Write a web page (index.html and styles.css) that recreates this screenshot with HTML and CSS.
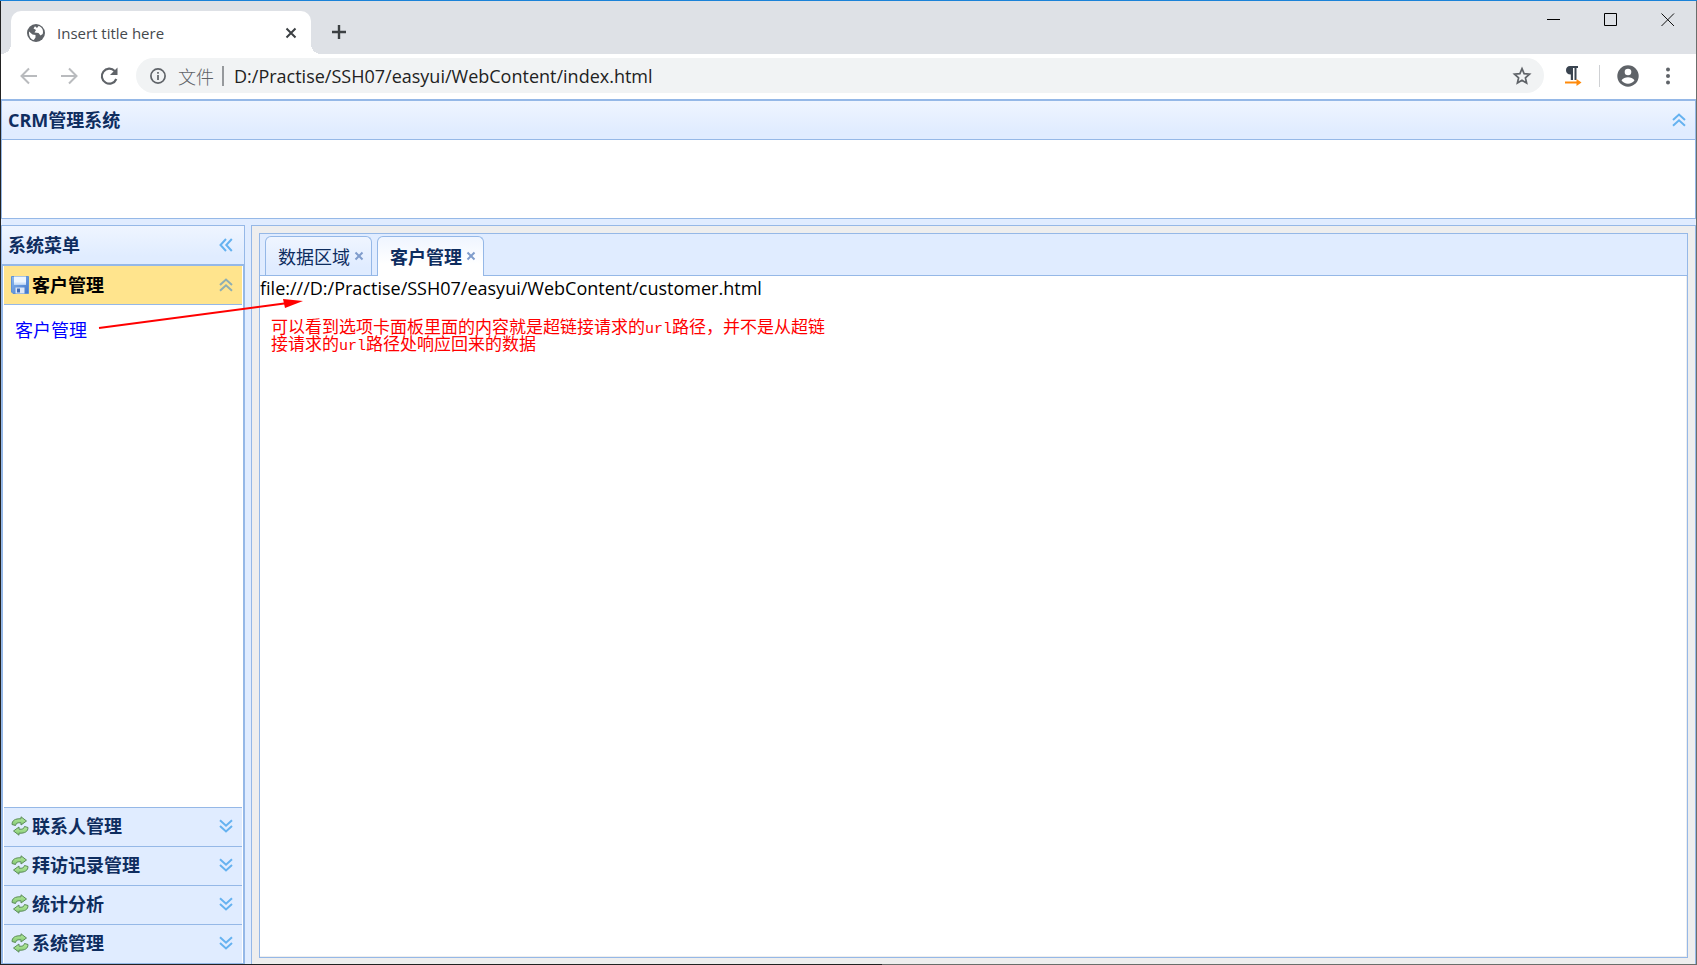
FILE: index.html
```html
<!DOCTYPE html>
<html lang="zh-CN">
<head>
<meta charset="utf-8">
<title>Insert title here</title>
<link rel="stylesheet" href="styles.css">
</head>
<body>
<svg class="defs" aria-hidden="true">
  <defs>
    <linearGradient id="leaf" x1="0" y1="0" x2="0" y2="1"><stop offset="0" stop-color="#b4ec9c"/><stop offset="1" stop-color="#84c873"/></linearGradient>
    <linearGradient id="disk" x1="0" y1="0" x2="1" y2="1"><stop offset="0" stop-color="#8fbcf0"/><stop offset="1" stop-color="#3f74c8"/></linearGradient>
    <symbol id="chevrons" viewBox="0 0 14 14"><path d="M1 7 7 1.500 13 7M1 12.800 7 7.300 13 12.800" fill="none" stroke="currentColor" stroke-width="2"/></symbol>
    <symbol id="reload" viewBox="0 0 18 20">
      <path d="M1 8.500C1 4.500 4 2.500 10 2.800V.8l5.500 4.200L10 9V6.800C6.500 6.500 5 7.200 4.500 9.500Z" fill="url(#leaf)" stroke="#5b8b59"/>
      <path d="M17 11.500c0 4-3 6-9 5.700v2L2.500 15 8 11v2.200c3.500.3 5-.4 5.500-2.700Z" fill="url(#leaf)" stroke="#5b8b59"/>
    </symbol>
    <symbol id="cross" viewBox="0 0 10 10"><path d="M1.500 1.500l7 7m0-7-7 7" fill="none" stroke="currentColor" stroke-width="2"/></symbol>
  </defs>
</svg>
<div class="window">
  <div class="tabstrip">
    <div class="browser-tab">
      <svg class="globe" viewBox="0 0 18 18"><circle cx="9" cy="9" r="9" fill="#5f6368"/><path d="M2 7.500 5.500 10.500l3 .5v2.500l-1.700 2.500C4 15.500 2 12.500 2 9ZM8 2.200 6.500 4.500 9 6l-1.500 2.500 4 .5 2 2.500 2.200-1.500C17 6 14.500 2.500 11.500 2L10 4Z" fill="#fff"/></svg>
      <span class="browser-title">Insert title here</span>
      <button class="plain close-tab" aria-label="Close tab"><svg viewBox="0 0 12 12"><path d="M1.500 1.500l9 9m0-9-9 9" stroke="#3c4043" stroke-width="2" fill="none"/></svg></button>
    </div>
    <button class="plain new-tab" aria-label="New tab"><svg viewBox="0 0 16 16"><path d="M8 1v14M1 8h14" stroke="#3c4043" stroke-width="2.400" fill="none"/></svg></button>
    <div class="window-buttons">
      <button class="plain" aria-label="Minimize"><svg viewBox="0 0 14 14"><path d="M0 6.500h13" stroke="#000"/></svg></button>
      <button class="plain" aria-label="Maximize"><svg viewBox="0 0 14 14"><path d="M.5.5h12v12H.5z" stroke="#000" fill="none"/></svg></button>
      <button class="plain" aria-label="Close"><svg viewBox="0 0 14 14"><path d="M.5.5l12.500 12.500M13 .5.5 13" stroke="#111" fill="none"/></svg></button>
    </div>
  </div>
  <div class="toolbar">
    <button class="plain nav" aria-label="Back"><svg viewBox="0 0 20 20"><path d="M18 10H3m7-7.500L2.500 10l7.500 7.500" stroke="#b9bbbe" stroke-width="2" fill="none"/></svg></button>
    <button class="plain nav" aria-label="Forward"><svg viewBox="0 0 20 20"><path d="M2 10h15m-7-7.500 7.500 7.500-7.500 7.500" stroke="#b9bbbe" stroke-width="2" fill="none"/></svg></button>
    <button class="plain nav reload" aria-label="Reload"><svg viewBox="0 0 20 20"><path d="M17.300 13A7.500 7.500 0 1 1 15.700 4.900" stroke="#5f6368" stroke-width="2.200" fill="none"/><path d="M18.500 1.500v7.500H11z" fill="#5f6368"/></svg></button>
    <div class="omnibox">
      <svg class="info" viewBox="0 0 16 16"><circle cx="8" cy="8" r="7.100" fill="none" stroke="#5f6368" stroke-width="1.700"/><path d="M8 7v5M8 4v1.700" stroke="#5f6368" stroke-width="1.700"/></svg>
      <label class="scheme" for="address">文件</label>
      <input class="address" id="address" value="D:/Practise/SSH07/easyui/WebContent/index.html">
      <button class="plain star" aria-label="Bookmark"><svg viewBox="0 0 20 20"><path d="M10 2.700l2.100 5 5.400.5-4.100 3.600 1.200 5.300L10 14.300l-4.600 2.800 1.200-5.300-4.100-3.600 5.400-.5z" fill="none" stroke="#5f6368" stroke-width="1.700"/></svg></button>
    </div>
    <button class="plain pilcrow" aria-label="Extension"><svg viewBox="0 0 18 22"><path d="M6 1h8v2h-1.500v12h-2V3H9v12H6.800V9.500C3.500 9.500 2 7.500 2 5.200S3.500 1 6 1Z" fill="#3a4450"/><path d="M1 17.500h13" stroke="#ff8a0a" stroke-width="2"/><path d="M12.500 14l5 3.500-5 3.500z" fill="#ff8a0a"/></svg></button>
    <button class="plain profile" aria-label="Profile"><svg viewBox="0 0 22 22"><circle cx="11" cy="11" r="10.700" fill="#5f6368"/><circle cx="11" cy="7" r="3.300" fill="#fff"/><path d="M4.500 15.200c1.300-2 4-3 6.500-3s5.200 1 6.500 3A7.800 7.800 0 0 1 4.500 15.200Z" fill="#fff"/></svg></button>
    <button class="plain more" aria-label="Menu"><svg viewBox="0 0 4 18"><g fill="#5f6368"><circle cx="2" cy="2.500" r="2"/><circle cx="2" cy="9" r="2"/><circle cx="2" cy="15.500" r="2"/></g></svg></button>
  </div>

  <main class="page">
    <section class="north">
      <header class="panel-header north-header"><h1>CRM管理系统</h1><button class="plain tool" aria-label="Collapse"><svg><use href="#chevrons"/></svg></button></header>
      <div class="north-body"></div>
    </section>
    <div class="columns">
      <nav class="west">
        <header class="panel-header"><h2>系统菜单</h2><button class="plain tool left" aria-label="Collapse"><svg><use href="#chevrons"/></svg></button></header>
        <div class="accordion">
          <button class="plain item selected"><svg class="item-icon" viewBox="0 0 18 19"><path d="M.5 1h17v17H2L.5 16.500Z" fill="url(#disk)" stroke="#5f91d6"/><path d="M3 1h12v8H3z" fill="#eef6ff"/><path d="M3 7h12v2H3z" fill="#cfe3fa"/><path d="M4.500 12h9v6h-9z" fill="#dce7f7"/><path d="M6 13h3v4H6z" fill="#3f6dbb"/></svg><span>客户管理</span><svg class="arrow"><use href="#chevrons"/></svg></button>
          <div class="item-body"><a href="#customer">客户管理</a></div>
          <button class="plain item"><svg class="item-icon"><use href="#reload"/></svg><span>联系人管理</span><svg class="arrow down"><use href="#chevrons"/></svg></button>
          <button class="plain item"><svg class="item-icon"><use href="#reload"/></svg><span>拜访记录管理</span><svg class="arrow down"><use href="#chevrons"/></svg></button>
          <button class="plain item"><svg class="item-icon"><use href="#reload"/></svg><span>统计分析</span><svg class="arrow down"><use href="#chevrons"/></svg></button>
          <button class="plain item"><svg class="item-icon"><use href="#reload"/></svg><span>系统管理</span><svg class="arrow down"><use href="#chevrons"/></svg></button>
        </div>
      </nav>
      <section class="center">
        <div class="tabs">
          <div class="tab-header">
            <div class="tab"><button class="plain tab-label">数据区域</button><button class="plain tab-close" aria-label="Close"><svg><use href="#cross"/></svg></button></div>
            <div class="tab active"><button class="plain tab-label">客户管理</button><button class="plain tab-close" aria-label="Close"><svg><use href="#cross"/></svg></button></div>
          </div>
          <div class="tab-panel">
            <p class="path">file:///D:/Practise/SSH07/easyui/WebContent/customer.html</p>
            <p class="note">可以看到选项卡面板里面的内容就是超链接请求的<span>url</span>路径，并不是从超链<br>接请求的<span>url</span>路径处响应回来的数据</p>
          </div>
        </div>
      </section>
      <svg class="pointer" viewBox="0 0 206 30" aria-hidden="true"><path d="M1 29 190 4" stroke="#f00" stroke-width="2"/><path d="M185 0l20 2-18 7z" fill="#f00"/></svg>
    </div>
  </main>
</div>
</body>
</html>
```

FILE: styles.css
```css
* { box-sizing: border-box; }
body {
  margin: 0;
  font-family: "Open Sans", "Noto Sans CJK SC", sans-serif;
  font-size: 18px;
  color: #000;
}
h1, h2, p { margin: 0; }
svg { display: block; }
.defs { position: absolute; width: 0; height: 0; }
.plain { border: 0; padding: 0; margin: 0; background: none; font: inherit; color: inherit; }

.window {
  display: flex;
  flex-direction: column;
  height: 100vh;
  padding: 1px;
  background: linear-gradient(to right, #222 52%, #6b6e6b 52%);
  box-shadow: inset 0 1px #1a82d8;
}

/* Browser frame */
.tabstrip { display: flex; height: 53px; background: #dee1e6; padding-left: 10px; }
.browser-tab {
  position: relative;
  display: flex;
  align-items: center;
  gap: 12px;
  width: 300px;
  margin-top: 10px;
  padding: 0 14px 0 16px;
  border-radius: 10px 10px 0 0;
  background: #fff;
}
.browser-tab::before, .browser-tab::after {
  content: "";
  position: absolute;
  bottom: 0;
  width: 10px;
  height: 10px;
}
.browser-tab::before { left: -10px; background: radial-gradient(circle at 0 0, #dee1e6 10px, #fff 10px); }
.browser-tab::after { right: -10px; background: radial-gradient(circle at 100% 0, #dee1e6 10px, #fff 10px); }
.globe { width: 18px; height: 18px; }
.browser-title { flex: 1; font-size: 15px; color: #45494d; }
.close-tab svg { width: 12px; height: 12px; }
.new-tab { margin: 9px 0 0 20px; }
.new-tab svg { width: 16px; height: 16px; }
.window-buttons { display: flex; align-items: flex-start; gap: 43px; margin: 12px 21px 0 auto; }
.window-buttons svg { width: 14px; height: 14px; }

.toolbar { display: flex; align-items: center; height: 45px; padding: 0 26px 2px 18px; background: #fff; }
.nav { margin-right: 20px; }
.nav.reload { margin-right: 17px; }
.nav svg { width: 20px; height: 20px; }
.omnibox {
  display: flex;
  align-items: center;
  flex: 1;
  height: 35px;
  margin-right: 20px;
  padding: 0 12px 0 14px;
  border-radius: 18px;
  background: #f1f3f4;
}
.info { width: 16px; height: 16px; }
.scheme {
  margin-left: 12px;
  padding-right: 8px;
  border-right: 2px solid #96999c;
  line-height: 20px;
  font-family: "Noto Sans CJK SC", sans-serif;
  font-weight: 300;
  color: #5f6368;
}
.address {
  flex: 1;
  margin-left: 10px;
  padding: 0;
  border: 0;
  outline: 0;
  background: none;
  font-family: "Open Sans", sans-serif;
  font-size: 18px;
  color: #222;
}
.star svg { width: 20px; height: 20px; }
.pilcrow svg { width: 18px; height: 22px; }
.profile { margin-left: 17px; padding-left: 17px; border-left: 1px solid #cfd1d4; }
.profile svg { width: 22px; height: 22px; }
.more { margin-left: 27px; }
.more svg { width: 4px; height: 18px; }

/* Layout regions */
.page { display: flex; flex-direction: column; flex: 1; min-height: 0; background: #e0ecff; }
.north { border: 1px solid #95b8e7; border-top-width: 2px; }
.panel-header {
  display: flex;
  align-items: center;
  justify-content: space-between;
  height: 39px;
  padding: 0 11px 0 6px;
  border-bottom: 1px solid #95b8e7;
  background: linear-gradient(#eff5ff 0, #e0ecff 80%);
  color: #0e2d5f;
}
.north-header { padding-right: 9px; }
.panel-header h1, .panel-header h2 { font-size: 18px; line-height: 24px; font-weight: 700; }
.tool { color: #65b2f0; }
.tool svg, .arrow { width: 14px; height: 14px; }
.left { transform: rotate(-90deg); }
.north-body { height: 78px; background: #fff; }
.columns { position: relative; display: flex; gap: 6px; flex: 1; min-height: 0; padding-top: 6px; }

.west { display: flex; flex-direction: column; width: 244px; border: 1px solid #95b8e7; border-bottom: 0; }
.accordion {
  display: flex;
  flex-direction: column;
  flex: 1;
  padding: 0 1px;
  border: 1px solid #95b8e7;
  background: #fff;
}
.item {
  display: flex;
  align-items: center;
  gap: 3px;
  height: 39px;
  padding: 0 9px 2px 7px;
  border-top: 1px solid #95b8e7;
  background: #e0ecff;
  color: #0e2d5f;
  font-weight: 700;
  line-height: 24px;
}
.item.selected { padding-bottom: 0; border-top: 0; border-bottom: 1px solid #95b8e7; background: #ffe48d; color: #000; }
.item-icon { width: 18px; height: 20px; }
.arrow { margin-left: auto; color: #65b2f0; }
.selected .arrow { color: #8daeb3; }
.down { transform: rotate(180deg); }
.item-body { flex: 1; padding: 12px 11px; line-height: 26px; }
.item-body a { color: #00f; text-decoration: none; }

.center { flex: 1; min-width: 0; padding: 7px 7px 6px; border: 1px solid #95b8e7; border-bottom: 0; background: #eee; }
.tabs { display: flex; flex-direction: column; height: 100%; border: 1px solid #95b8e7; background: #fff; }
.tab-header {
  display: flex;
  gap: 5px;
  height: 42px;
  padding: 2px 5px 0;
  border-bottom: 1px solid #95b8e7;
  background: #e0ecff;
}
.tab {
  display: flex;
  align-items: center;
  gap: 4px;
  height: 39px;
  padding: 0 7px 0 12px;
  border: 1px solid #95b8e7;
  border-bottom: 0;
  border-radius: 6px 6px 0 0;
  background: linear-gradient(#eff5ff, #e0ecff 80%);
  color: #0e2d5f;
}
.tab.active { height: 40px; padding-bottom: 2px; background: linear-gradient(#eff5ff, #fff 70%); font-weight: 700; }
.tab-close { color: #7f9ccc; }
.tab-close svg { width: 10px; height: 10px; }
.tab-panel { flex: 1; border: 1px solid #eee; border-width: 0 1px 1px 0; }
.path { line-height: 24px; }
.note {
  margin: 17px 0 0 11px;
  font-family: "Noto Sans CJK SC", sans-serif;
  font-size: 17px;
  line-height: 17px;
  color: #f00;
}
.note span { font-family: "Liberation Mono", monospace; font-size: 15px; line-height: 1px; }
.pointer { position: absolute; left: 97px; top: 80px; width: 206px; height: 30px; }
```
